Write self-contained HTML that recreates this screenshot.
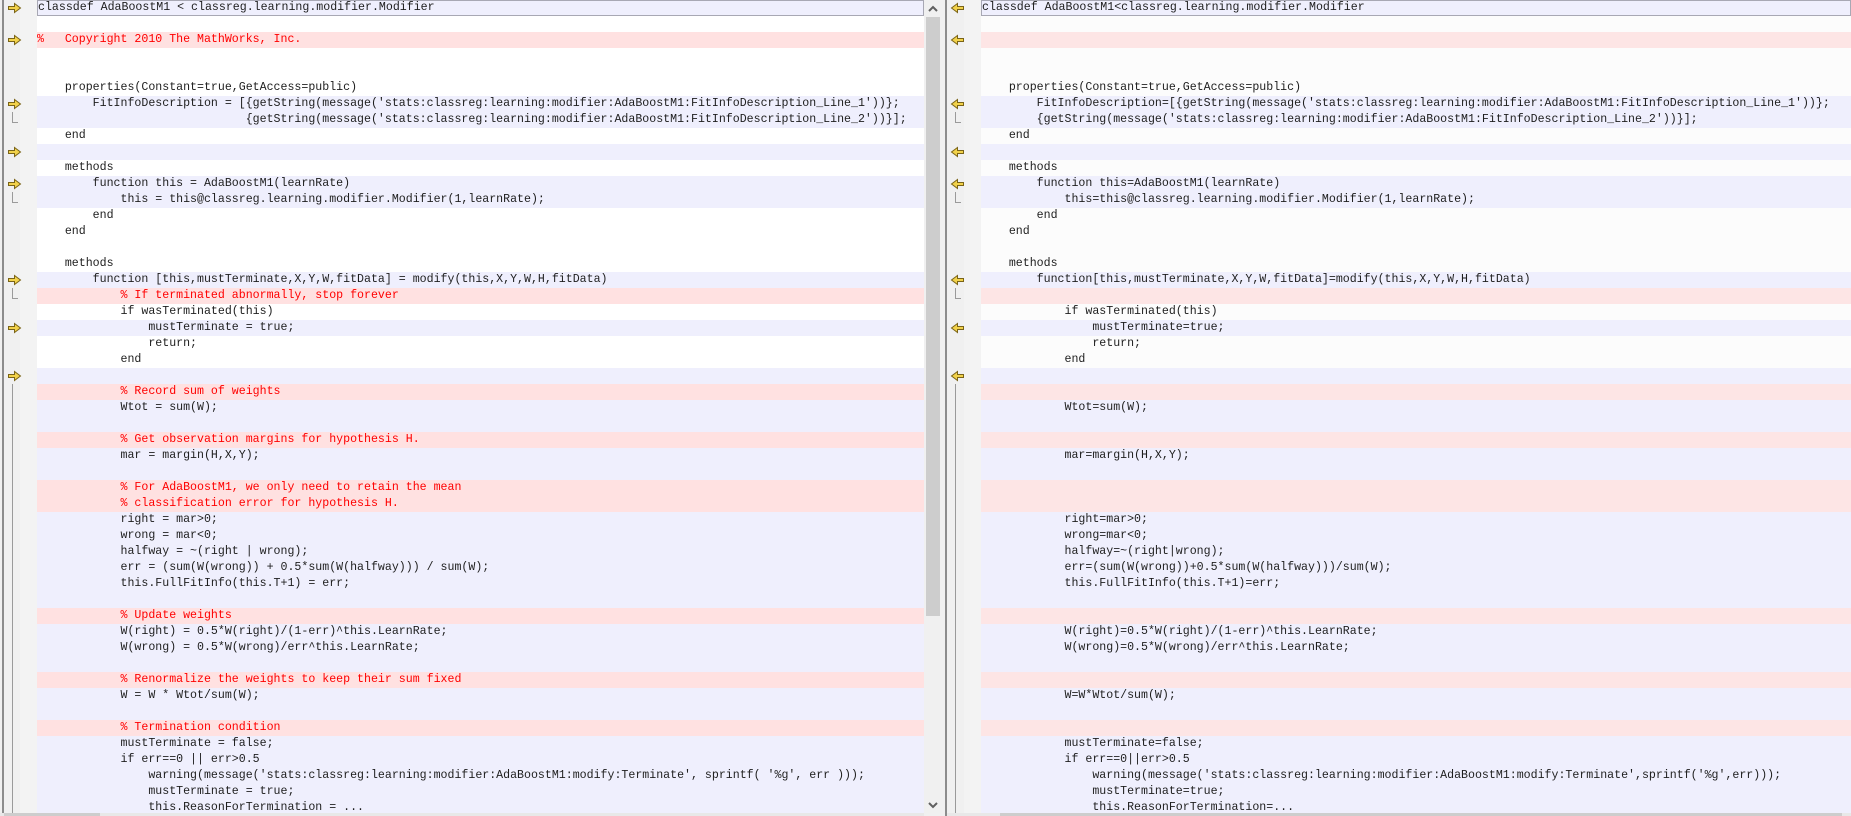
<!DOCTYPE html>
<html><head><meta charset="utf-8"><style>
*{margin:0;padding:0;box-sizing:border-box}
body{width:1851px;height:816px;overflow:hidden;background:#fff;position:relative;font-family:"Liberation Mono",monospace;font-size:11.6px;color:#1e1e1e}
.panel{position:absolute;top:0;height:813px;overflow:hidden}
.row{position:absolute;left:0;right:0;height:16px;line-height:16px;white-space:pre}
.w{background:#fff}.b{background:#efeffd}.p{background:#ffe1e1}
#R .w{background:#fcfcfc}#R .p{background:#fde5e5}
.c{color:#f00}
.box{border:1px solid #a8a8b4;background:#efeffd;line-height:14px}
.gut{position:absolute;top:0;height:816px;background:#f0f0f0}
.g2{position:absolute;top:0;height:816px;background:#f3f3f3}
.vl{position:absolute;width:1px;background:#9a9a9a}
.ar{position:absolute}
</style></head><body>
<!-- left gutter -->
<div class="gut" style="left:0;width:37px"></div>
<div class="g2" style="left:20px;width:17px"></div>
<div class="vl" style="left:2px;top:0;height:816px;width:2px;background:#8c8c8c"></div>
<!-- right gutter -->
<div class="gut" style="left:941px;width:40px"></div>
<div class="g2" style="left:964px;width:17px"></div>
<div class="vl" style="left:945px;top:0;height:816px;width:2px;background:#8c8c8c"></div>

<div class="panel" id="L" style="left:37px;width:887px">
<div class="row box" style="top:0;height:16px">classdef AdaBoostM1 &lt; classreg.learning.modifier.Modifier</div>
<div class="row w" style="top:16px"></div>
<div class="row p c" style="top:32px">%   Copyright 2010 The MathWorks, Inc.</div>
<div class="row w" style="top:48px"></div>
<div class="row w" style="top:64px"></div>
<div class="row w" style="top:80px">    properties(Constant=true,GetAccess=public)</div>
<div class="row b" style="top:96px">        FitInfoDescription = [{getString(message('stats:classreg:learning:modifier:AdaBoostM1:FitInfoDescription_Line_1'))};</div>
<div class="row b" style="top:112px">                              {getString(message('stats:classreg:learning:modifier:AdaBoostM1:FitInfoDescription_Line_2'))}];</div>
<div class="row w" style="top:128px">    end</div>
<div class="row b" style="top:144px"></div>
<div class="row w" style="top:160px">    methods</div>
<div class="row b" style="top:176px">        function this = AdaBoostM1(learnRate)</div>
<div class="row b" style="top:192px">            this = this@classreg.learning.modifier.Modifier(1,learnRate);</div>
<div class="row w" style="top:208px">        end</div>
<div class="row w" style="top:224px">    end</div>
<div class="row w" style="top:240px"></div>
<div class="row w" style="top:256px">    methods</div>
<div class="row b" style="top:272px">        function [this,mustTerminate,X,Y,W,fitData] = modify(this,X,Y,W,H,fitData)</div>
<div class="row p c" style="top:288px">            % If terminated abnormally, stop forever</div>
<div class="row w" style="top:304px">            if wasTerminated(this)</div>
<div class="row b" style="top:320px">                mustTerminate = true;</div>
<div class="row w" style="top:336px">                return;</div>
<div class="row w" style="top:352px">            end</div>
<div class="row b" style="top:368px"></div>
<div class="row p c" style="top:384px">            % Record sum of weights</div>
<div class="row b" style="top:400px">            Wtot = sum(W);</div>
<div class="row b" style="top:416px"></div>
<div class="row p c" style="top:432px">            % Get observation margins for hypothesis H.</div>
<div class="row b" style="top:448px">            mar = margin(H,X,Y);</div>
<div class="row b" style="top:464px"></div>
<div class="row p c" style="top:480px">            % For AdaBoostM1, we only need to retain the mean</div>
<div class="row p c" style="top:496px">            % classification error for hypothesis H.</div>
<div class="row b" style="top:512px">            right = mar&gt;0;</div>
<div class="row b" style="top:528px">            wrong = mar&lt;0;</div>
<div class="row b" style="top:544px">            halfway = ~(right | wrong);</div>
<div class="row b" style="top:560px">            err = (sum(W(wrong)) + 0.5*sum(W(halfway))) / sum(W);</div>
<div class="row b" style="top:576px">            this.FullFitInfo(this.T+1) = err;</div>
<div class="row b" style="top:592px"></div>
<div class="row p c" style="top:608px">            % Update weights</div>
<div class="row b" style="top:624px">            W(right) = 0.5*W(right)/(1-err)^this.LearnRate;</div>
<div class="row b" style="top:640px">            W(wrong) = 0.5*W(wrong)/err^this.LearnRate;</div>
<div class="row b" style="top:656px"></div>
<div class="row p c" style="top:672px">            % Renormalize the weights to keep their sum fixed</div>
<div class="row b" style="top:688px">            W = W * Wtot/sum(W);</div>
<div class="row b" style="top:704px"></div>
<div class="row p c" style="top:720px">            % Termination condition</div>
<div class="row b" style="top:736px">            mustTerminate = false;</div>
<div class="row b" style="top:752px">            if err==0 || err&gt;0.5</div>
<div class="row b" style="top:768px">                warning(message('stats:classreg:learning:modifier:AdaBoostM1:modify:Terminate', sprintf( '%g', err )));</div>
<div class="row b" style="top:784px">                mustTerminate = true;</div>
<div class="row b" style="top:800px">                this.ReasonForTermination = ...</div>
</div>

<div class="panel" id="R" style="left:981px;width:870px">
<div class="row box" style="top:0;height:16px">classdef AdaBoostM1&lt;classreg.learning.modifier.Modifier</div>
<div class="row w" style="top:16px"></div>
<div class="row p" style="top:32px"></div>
<div class="row w" style="top:48px"></div>
<div class="row w" style="top:64px"></div>
<div class="row w" style="top:80px">    properties(Constant=true,GetAccess=public)</div>
<div class="row b" style="top:96px">        FitInfoDescription=[{getString(message('stats:classreg:learning:modifier:AdaBoostM1:FitInfoDescription_Line_1'))};</div>
<div class="row b" style="top:112px">        {getString(message('stats:classreg:learning:modifier:AdaBoostM1:FitInfoDescription_Line_2'))}];</div>
<div class="row w" style="top:128px">    end</div>
<div class="row b" style="top:144px"></div>
<div class="row w" style="top:160px">    methods</div>
<div class="row b" style="top:176px">        function this=AdaBoostM1(learnRate)</div>
<div class="row b" style="top:192px">            this=this@classreg.learning.modifier.Modifier(1,learnRate);</div>
<div class="row w" style="top:208px">        end</div>
<div class="row w" style="top:224px">    end</div>
<div class="row w" style="top:240px"></div>
<div class="row w" style="top:256px">    methods</div>
<div class="row b" style="top:272px">        function[this,mustTerminate,X,Y,W,fitData]=modify(this,X,Y,W,H,fitData)</div>
<div class="row p" style="top:288px"></div>
<div class="row w" style="top:304px">            if wasTerminated(this)</div>
<div class="row b" style="top:320px">                mustTerminate=true;</div>
<div class="row w" style="top:336px">                return;</div>
<div class="row w" style="top:352px">            end</div>
<div class="row b" style="top:368px"></div>
<div class="row p" style="top:384px"></div>
<div class="row b" style="top:400px">            Wtot=sum(W);</div>
<div class="row b" style="top:416px"></div>
<div class="row p" style="top:432px"></div>
<div class="row b" style="top:448px">            mar=margin(H,X,Y);</div>
<div class="row b" style="top:464px"></div>
<div class="row p" style="top:480px"></div>
<div class="row p" style="top:496px"></div>
<div class="row b" style="top:512px">            right=mar&gt;0;</div>
<div class="row b" style="top:528px">            wrong=mar&lt;0;</div>
<div class="row b" style="top:544px">            halfway=~(right|wrong);</div>
<div class="row b" style="top:560px">            err=(sum(W(wrong))+0.5*sum(W(halfway)))/sum(W);</div>
<div class="row b" style="top:576px">            this.FullFitInfo(this.T+1)=err;</div>
<div class="row b" style="top:592px"></div>
<div class="row p" style="top:608px"></div>
<div class="row b" style="top:624px">            W(right)=0.5*W(right)/(1-err)^this.LearnRate;</div>
<div class="row b" style="top:640px">            W(wrong)=0.5*W(wrong)/err^this.LearnRate;</div>
<div class="row b" style="top:656px"></div>
<div class="row p" style="top:672px"></div>
<div class="row b" style="top:688px">            W=W*Wtot/sum(W);</div>
<div class="row b" style="top:704px"></div>
<div class="row p" style="top:720px"></div>
<div class="row b" style="top:736px">            mustTerminate=false;</div>
<div class="row b" style="top:752px">            if err==0||err&gt;0.5</div>
<div class="row b" style="top:768px">                warning(message('stats:classreg:learning:modifier:AdaBoostM1:modify:Terminate',sprintf('%g',err)));</div>
<div class="row b" style="top:784px">                mustTerminate=true;</div>
<div class="row b" style="top:800px">                this.ReasonForTermination=...</div>
</div>

<!-- vertical scrollbar -->
<div style="position:absolute;left:924px;top:0;width:17px;height:816px;background:#f0f0f0"></div>
<div style="position:absolute;left:926px;top:17px;width:14px;height:599px;background:#cdcdcd"></div>
<svg style="position:absolute;left:926px;top:4px" width="14" height="10"><path d="M3,7 L7,3 L11,7" fill="none" stroke="#606060" stroke-width="2"/></svg>
<svg style="position:absolute;left:926px;top:800px" width="14" height="10"><path d="M3,3 L7,7 L11,3" fill="none" stroke="#606060" stroke-width="2"/></svg>

<!-- horizontal scrollbars -->
<div style="position:absolute;left:0;top:813px;width:924px;height:3px;background:#e8e8e8"></div>
<div style="position:absolute;left:4px;top:813px;width:96px;height:3px;background:#cdcdcd"></div>
<div style="position:absolute;left:947px;top:813px;width:904px;height:3px;background:#e8e8e8"></div>
<div style="position:absolute;left:1000px;top:813px;width:842px;height:3px;background:#cdcdcd"></div>

<!-- left gutter markers -->
<svg style="position:absolute;left:0;top:0" width="37" height="813">
<defs>
<path id="ra" d="M1.5,3.5 H7.5 V0.5 L13.5,5 L7.5,9.5 V6.5 H1.5 Z" fill="#f2d24a" stroke="#7a6418" stroke-width="1"/>
</defs>
<use href="#ra" x="7" y="3"/>
<use href="#ra" x="7" y="35"/>
<use href="#ra" x="7" y="99"/>
<use href="#ra" x="7" y="147"/>
<use href="#ra" x="7" y="179"/>
<use href="#ra" x="7" y="275"/>
<use href="#ra" x="7" y="323"/>
<use href="#ra" x="7" y="371"/>
<path d="M12.5,112 V122.5 H18" fill="none" stroke="#9a9a9a"/>
<path d="M12.5,192 V202.5 H18" fill="none" stroke="#9a9a9a"/>
<path d="M12.5,288 V298.5 H18" fill="none" stroke="#9a9a9a"/>
<path d="M12.5,384 V813" fill="none" stroke="#9a9a9a"/>
</svg>
<!-- right gutter markers -->
<svg style="position:absolute;left:947px;top:0" width="34" height="813">
<defs>
<path id="la" d="M13.5,3.5 H7.5 V0.5 L1.5,5 L7.5,9.5 V6.5 H13.5 Z" fill="#f2d24a" stroke="#7a6418" stroke-width="1"/>
</defs>
<use href="#la" x="3" y="3"/>
<use href="#la" x="3" y="35"/>
<use href="#la" x="3" y="99"/>
<use href="#la" x="3" y="147"/>
<use href="#la" x="3" y="179"/>
<use href="#la" x="3" y="275"/>
<use href="#la" x="3" y="323"/>
<use href="#la" x="3" y="371"/>
<path d="M8.5,112 V122.5 H14" fill="none" stroke="#9a9a9a"/>
<path d="M8.5,192 V202.5 H14" fill="none" stroke="#9a9a9a"/>
<path d="M8.5,288 V298.5 H14" fill="none" stroke="#9a9a9a"/>
<path d="M8.5,384 V813" fill="none" stroke="#9a9a9a"/>
</svg>
</body></html>
